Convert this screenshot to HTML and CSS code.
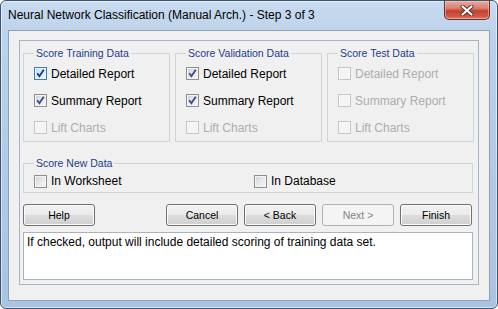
FILE: index.html
```html
<!DOCTYPE html>
<html>
<head>
<meta charset="utf-8">
<link rel="stylesheet" href="styles.css">
</head>
<body>
<div class="window">
  <div class="titlebar">
    <div class="title">Neural Network Classification (Manual Arch.) - Step 3 of 3</div>
    <div class="close">
      <svg width="14" height="11" viewBox="0 0 14 11"><path d="M2.5 1.5 L11.5 9.5 M11.5 1.5 L2.5 9.5" stroke="#5a2a22" stroke-width="4" stroke-linecap="round"/><path d="M2.5 1.5 L11.5 9.5 M11.5 1.5 L2.5 9.5" stroke="#fff" stroke-width="2.2" stroke-linecap="round"/></svg>
    </div>
  </div>
  <div class="client">
    <div class="panel">
      <div class="groups">
        <fieldset class="group">
          <legend>Score Training Data</legend>
          <div class="row"><span class="cb checked hot"><svg viewBox="0 0 13 13"><path d="M3.2 6.3 L5.4 9.2 L9.8 2.8" fill="none" stroke="#23388a" stroke-width="1.9"/></svg></span><span>Detailed Report</span></div>
          <div class="row"><span class="cb checked"><svg viewBox="0 0 13 13"><path d="M3.2 6.3 L5.4 9.2 L9.8 2.8" fill="none" stroke="#3b4f92" stroke-width="1.9"/></svg></span><span>Summary Report</span></div>
          <div class="row disabled"><span class="cb"></span><span>Lift Charts</span></div>
        </fieldset>
        <fieldset class="group">
          <legend>Score Validation Data</legend>
          <div class="row"><span class="cb checked"><svg viewBox="0 0 13 13"><path d="M3.2 6.3 L5.4 9.2 L9.8 2.8" fill="none" stroke="#3b4f92" stroke-width="1.9"/></svg></span><span>Detailed Report</span></div>
          <div class="row"><span class="cb checked"><svg viewBox="0 0 13 13"><path d="M3.2 6.3 L5.4 9.2 L9.8 2.8" fill="none" stroke="#3b4f92" stroke-width="1.9"/></svg></span><span>Summary Report</span></div>
          <div class="row disabled"><span class="cb"></span><span>Lift Charts</span></div>
        </fieldset>
        <fieldset class="group">
          <legend>Score Test Data</legend>
          <div class="row disabled"><span class="cb"></span><span>Detailed Report</span></div>
          <div class="row disabled"><span class="cb"></span><span>Summary Report</span></div>
          <div class="row disabled"><span class="cb"></span><span>Lift Charts</span></div>
        </fieldset>
      </div>
      <fieldset class="group newdata">
        <legend>Score New Data</legend>
        <div class="newrow">
          <div class="row short"><span class="cb"></span><span>In Worksheet</span></div>
          <div class="row short"><span class="cb"></span><span>In Database</span></div>
        </div>
      </fieldset>
      <div class="buttons">
        <div class="btn">Help</div>
        <div class="btn push">Cancel</div>
        <div class="btn">&lt; Back</div>
        <div class="btn off">Next &gt;</div>
        <div class="btn">Finish</div>
      </div>
      <div class="desc">If checked, output will include detailed scoring of training data set.</div>
    </div>
  </div>
</div>
</body>
</html>
```
FILE: styles.css
```css
html, body {
  margin: 0;
  padding: 0;
}
body {
  width: 498px;
  height: 309px;
  overflow: hidden;
  font-family: "Liberation Sans", Arial, sans-serif;
  background: #ffffff;
}
.window {
  box-sizing: border-box;
  width: 498px;
  height: 309px;
  border: 1px solid #3a556f;
  border-radius: 6px;
  background: linear-gradient(180deg, #c8dbef 0%, #bcd2ea 12%, #b3cbe6 50%, #a9c3e0 100%);
  box-shadow: inset 0 0 0 1px rgba(255,255,255,0.55);
  padding: 0 7px 7px 7px;
  display: flex;
  flex-direction: column;
}
.titlebar {
  height: 29px;
  display: flex;
  align-items: flex-start;
  flex: none;
}
.title {
  font-size: 12px;
  color: #000;
  padding-top: 7px;
  white-space: nowrap;
}
.close {
  margin-left: auto;
  width: 46px;
  height: 19px;
  box-sizing: border-box;
  border: 1px solid #6e2f26;
  border-top: none;
  border-radius: 0 0 5px 5px;
  background: linear-gradient(180deg, #e8a99c 0%, #d98170 40%, #c3402f 55%, #cf5a45 85%, #e07e63 100%);
  box-shadow: inset 0 0 0 1px rgba(255,220,210,0.45);
  display: flex;
  align-items: center;
  justify-content: center;
}
.close svg {
  display: block;
}
.client {
  flex: 1;
  background: #f0f0f0;
  border: 1px solid #8ca2bb;
  padding: 9px 10px 0 10px;
}
.panel {
  border: 1px solid #a6b4c6;
  padding: 5px 5px 4px 3px;
}
.groups {
  display: grid;
  grid-template-columns: 147px 147px 147px;
  column-gap: 5px;
}
.group {
  margin: 0;
  min-width: 0;
  border: 1px solid #d0d5da;
  border-radius: 0;
  padding: 0 0 0 10px;
}
.group legend {
  font-size: 10.5px;
  line-height: 14px;
  color: #1d3c8c;
  padding: 0 2px;
}
.row {
  display: flex;
  align-items: center;
  gap: 4px;
  height: 27px;
  font-size: 12px;
  color: #000;
}
.row.short {
  height: 22px;
}
.row.disabled {
  color: #adadad;
}
.cb {
  box-sizing: border-box;
  width: 13px;
  height: 13px;
  flex: none;
  border: 1px solid #8e8f8f;
  background: linear-gradient(135deg, #cbcfd5 0%, #e6e8eb 50%, #f7f7f7 100%);
  box-shadow: inset 0 0 0 1px #f4f4f4;
  position: relative;
}
.cb svg {
  position: absolute;
  left: -1px;
  top: -1px;
  width: 13px;
  height: 13px;
}
.cb.hot {
  border-color: #3c7fb1;
  background: linear-gradient(135deg, #b9dcf3 0%, #dff0fa 60%, #f4fafe 100%);
  box-shadow: inset 0 0 0 1px #e6f4fc;
}
.row.disabled .cb {
  border-color: #c6c6c6;
  background: #f4f4f4;
  box-shadow: inset 0 0 0 1px #f8f8f8;
}
.newdata {
  margin-top: 14px;
}
.newrow {
  display: grid;
  grid-template-columns: 220px 1fr;
}
.buttons {
  display: flex;
  gap: 6px;
  margin-top: 11px;
  padding-right: 1px;
}
.btn {
  box-sizing: border-box;
  width: 72px;
  height: 22px;
  border: 1px solid #707070;
  border-radius: 3px;
  background: linear-gradient(180deg, #f2f2f2 0%, #ebebeb 48%, #dddddd 52%, #cfcfcf 100%);
  box-shadow: inset 0 0 0 1px #fbfbfb;
  font-size: 10.5px;
  color: #000;
  display: flex;
  align-items: center;
  justify-content: center;
}
.btn.push {
  margin-left: auto;
}
.btn.off {
  border-color: #adb2b5;
  background: #f4f4f4;
  box-shadow: none;
  color: #838383;
}
.desc {
  margin-top: 6px;
  height: 48px;
  box-sizing: border-box;
  background: #fff;
  border: 1px solid #abb3bd;
  padding: 2px 3px;
  font-size: 12px;
  line-height: 14px;
  color: #000;
}
```
